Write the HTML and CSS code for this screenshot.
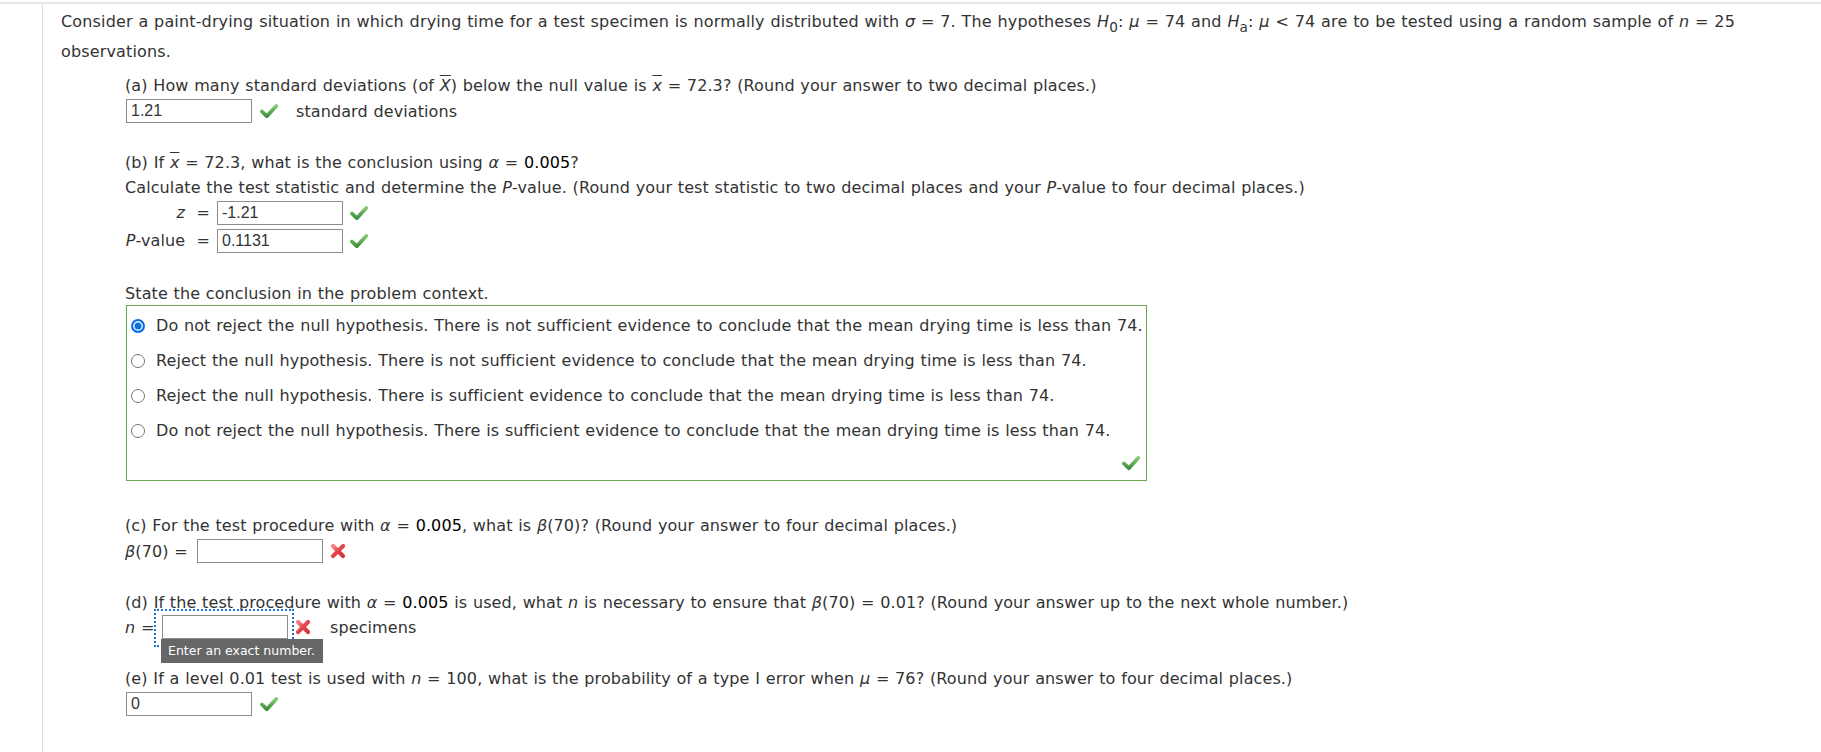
FILE: index.html
```html
<!DOCTYPE html>
<html lang="en">
<head>
<meta charset="utf-8">
<title>Paint drying hypothesis test</title>
<link rel="stylesheet" href="styles.css">
</head>
<body>
<div class="topbar"></div>
<main class="frame">
  <p class="intro">Consider a paint-drying situation in which drying time for a test specimen is normally distributed with <i>σ</i> = 7. The hypotheses <i>H</i><sub>0</sub>: <i>μ</i> = 74 and <i>H</i><sub>a</sub>: <i>μ</i> &lt; 74 are to be tested using a random sample of <i>n</i> = 25<br>observations.</p>

  <div class="sub">
    <section class="part part-a">
      <p class="q">(a) How many standard deviations (of <i class="bar">X</i>) below the null value is <i class="bar">x</i> = 72.3? (Round your answer to two decimal places.)</p>
      <div class="row">
        <input class="field field-left" type="text" value="1.21" readonly>
        <svg class="ok" width="18" height="16" viewBox="0 0 18 16"><defs><linearGradient id="g1" x1="0" y1="0" x2="0" y2="1"><stop offset="0" stop-color="#86c977"/><stop offset="1" stop-color="#3f8f3a"/></linearGradient></defs><path d="M2 8.5 L6.8 13.2 L16.2 3" fill="none" stroke="url(#g1)" stroke-width="3.8" stroke-linecap="round" stroke-linejoin="round"/></svg>
        <span class="unit">standard deviations</span>
      </div>
    </section>

    <section class="part">
      <p class="q">(b) If <i class="bar">x</i> = 72.3, what is the conclusion using <i>α</i> = <span class="num">0.005</span>?</p>
      <p class="q">Calculate the test statistic and determine the <i>P</i>-value. (Round your test statistic to two decimal places and your <i>P</i>-value to four decimal places.)</p>
      <div class="calc">
        <span class="lbl"><i>z</i> &nbsp;=</span>
        <input class="field" type="text" value="-1.21" readonly>
        <svg class="ok ok-b" width="18" height="16" viewBox="0 0 18 16"><defs><linearGradient id="g2" x1="0" y1="0" x2="0" y2="1"><stop offset="0" stop-color="#86c977"/><stop offset="1" stop-color="#3f8f3a"/></linearGradient></defs><path d="M2 8.5 L6.8 13.2 L16.2 3" fill="none" stroke="url(#g2)" stroke-width="3.8" stroke-linecap="round" stroke-linejoin="round"/></svg>
        <span class="lbl"><i>P</i>-value &nbsp;=</span>
        <input class="field" type="text" value="0.1131" readonly>
        <svg class="ok ok-b" width="18" height="16" viewBox="0 0 18 16"><defs><linearGradient id="g3" x1="0" y1="0" x2="0" y2="1"><stop offset="0" stop-color="#86c977"/><stop offset="1" stop-color="#3f8f3a"/></linearGradient></defs><path d="M2 8.5 L6.8 13.2 L16.2 3" fill="none" stroke="url(#g3)" stroke-width="3.8" stroke-linecap="round" stroke-linejoin="round"/></svg>
      </div>

      <p class="state">State the conclusion in the problem context.</p>
      <div class="choices">
        <div class="opt"><span class="radio on"></span>Do not reject the null hypothesis. There is not sufficient evidence to conclude that the mean drying time is less than 74.</div>
        <div class="opt"><span class="radio"></span>Reject the null hypothesis. There is not sufficient evidence to conclude that the mean drying time is less than 74.</div>
        <div class="opt"><span class="radio"></span>Reject the null hypothesis. There is sufficient evidence to conclude that the mean drying time is less than 74.</div>
        <div class="opt"><span class="radio"></span>Do not reject the null hypothesis. There is sufficient evidence to conclude that the mean drying time is less than 74.</div>
        <div class="box-foot">
          <svg class="ok-box" width="18" height="16" viewBox="0 0 18 16"><defs><linearGradient id="g4" x1="0" y1="0" x2="0" y2="1"><stop offset="0" stop-color="#86c977"/><stop offset="1" stop-color="#3f8f3a"/></linearGradient></defs><path d="M2 8.5 L6.8 13.2 L16.2 3" fill="none" stroke="url(#g4)" stroke-width="3.8" stroke-linecap="round" stroke-linejoin="round"/></svg>
        </div>
      </div>
    </section>

    <section class="part part-c">
      <p class="q">(c) For the test procedure with <i>α</i> = <span class="num">0.005</span>, what is <i>β</i>(70)? (Round your answer to four decimal places.)</p>
      <div class="row">
        <span class="rlbl rlbl-beta"><i>β</i>(70) =</span>
        <input class="field" type="text" value="" readonly>
        <svg class="bad" width="16" height="16" viewBox="0 0 16 16"><defs><linearGradient id="r1" x1="0" y1="0" x2="1" y2="1"><stop offset="0" stop-color="#f6868a"/><stop offset="0.5" stop-color="#e5434b"/><stop offset="1" stop-color="#d8353c"/></linearGradient></defs><path d="M3 3 L13 13 M13 3 L3 13" stroke="url(#r1)" stroke-width="4.2" stroke-linecap="round"/></svg>
      </div>
    </section>

    <section class="part part-d">
      <p class="q">(d) If the test procedure with <i>α</i> = <span class="num">0.005</span> is used, what <i>n</i> is necessary to ensure that <i>β</i>(70) = 0.01? (Round your answer up to the next whole number.)</p>
      <div class="row row-d">
        <span class="rlbl rlbl-n"><i>n</i> =</span>
        <span class="focus">
          <input class="field" type="text" value="" readonly>
          <span class="tip">Enter an exact number.</span>
        </span>
        <svg class="bad" width="16" height="16" viewBox="0 0 16 16"><defs><linearGradient id="r2" x1="0" y1="0" x2="1" y2="1"><stop offset="0" stop-color="#f6868a"/><stop offset="0.5" stop-color="#e5434b"/><stop offset="1" stop-color="#d8353c"/></linearGradient></defs><path d="M3 3 L13 13 M13 3 L3 13" stroke="url(#r2)" stroke-width="4.2" stroke-linecap="round"/></svg>
        <span class="unit unit-d">specimens</span>
      </div>
    </section>

    <section class="part">
      <p class="q">(e) If a level 0.01 test is used with <i>n</i> = 100, what is the probability of a type I error when <i>μ</i> = 76? (Round your answer to four decimal places.)</p>
      <div class="row">
        <input class="field field-left" type="text" value="0" readonly>
        <svg class="ok" width="18" height="16" viewBox="0 0 18 16"><defs><linearGradient id="g5" x1="0" y1="0" x2="0" y2="1"><stop offset="0" stop-color="#86c977"/><stop offset="1" stop-color="#3f8f3a"/></linearGradient></defs><path d="M2 8.5 L6.8 13.2 L16.2 3" fill="none" stroke="url(#g5)" stroke-width="3.8" stroke-linecap="round" stroke-linejoin="round"/></svg>
      </div>
    </section>
  </div>
</main>
</body>
</html>
```

FILE: styles.css
```css
* { box-sizing: border-box; }
html, body { margin: 0; padding: 0; background: #fff; }
body {
  font-family: "DejaVu Sans", Verdana, sans-serif;
  font-size: 16px;
  color: #333;
}
.topbar { height: 2px; margin-top: 2px; background: #e6e6e6; }
.frame {
  margin-left: 42px;
  border-left: 1px solid #dcdcdc;
  padding: 3px 0 0 18px;
  min-height: 748px;
  letter-spacing: 0.1px;
  word-spacing: 0.5px;
}
.intro { margin: 0; line-height: 30px; white-space: nowrap; letter-spacing: 0.15px; }
i { font-style: italic; }
sub { font-size: 0.85em; vertical-align: -0.35em; line-height: 0; }
.bar { text-decoration: overline; }
.num { color: #000; }

.sub { margin-left: 64px; }
.part { margin-top: 27px; }
.part-a { margin-top: 6px; }
.part-c { margin-top: 32px; }
.q { margin: 0; line-height: 25px; white-space: nowrap; }

.row { display: flex; align-items: center; height: 24px; margin-top: 1px; }
.row-d { margin-top: 0; }
.field {
  width: 126px;
  height: 24px;
  margin: 0;
  padding: 0 0 0 4px;
  border: 1px solid #8c8c8c;
  border-radius: 0;
  background: #fff;
  font: 16px "Liberation Sans", Arial, sans-serif;
  letter-spacing: 0;
  color: #333;
  outline: none;
}
.field-left { margin-left: 1px; }
.ok { margin-left: 8px; flex: none; }
.unit { margin-left: 18px; }
.bad { margin-left: 7px; flex: none; }
.unit-d { margin-left: 19px; }

.calc {
  display: grid;
  grid-template-columns: 92px auto auto;
  grid-auto-rows: 24px;
  row-gap: 4px;
  margin-top: 1px;
  align-items: center;
  justify-content: start;
}
.lbl { text-align: right; padding-right: 7px; line-height: 24px; white-space: nowrap; }
.ok-b { margin-left: 7px; }

.state { margin: 29px 0 0; line-height: 23px; }
.choices {
  margin-left: 1px;
  width: 1021px;
  border: 1px solid #6aa84f;
  padding-top: 2px;
}
.opt { display: flex; align-items: center; height: 35px; padding-left: 4px; white-space: nowrap; }
.radio {
  flex: none;
  width: 14px;
  height: 14px;
  border-radius: 50%;
  border: 1px solid #767676;
  margin-right: 11px;
  background: #fff;
}
.radio.on {
  border: 2px solid #0b6fe6;
  background: #0b6fe6;
  box-shadow: inset 0 0 0 1.5px #fff;
}
.box-foot { height: 32px; display: flex; justify-content: flex-end; padding: 7px 6px 0 0; }

.rlbl { flex: none; white-space: nowrap; }
.rlbl-beta { width: 72px; }
.rlbl-n { width: 37px; }

.focus { position: relative; display: block; height: 24px; }
.focus::before {
  content: "";
  position: absolute;
  left: -8px; top: -6px; right: -6px; bottom: -8px;
  border: 2px dotted #1f73d6;
}
.tip {
  position: absolute;
  left: -1px;
  top: 24px;
  width: 162px;
  height: 24px;
  background: #666;
  color: #fff;
  font: 12.5px "DejaVu Sans", Verdana, sans-serif;
  letter-spacing: 0;
  word-spacing: 0;
  line-height: 24px;
  padding-left: 7px;
  white-space: nowrap;
  z-index: 2;
}
```
